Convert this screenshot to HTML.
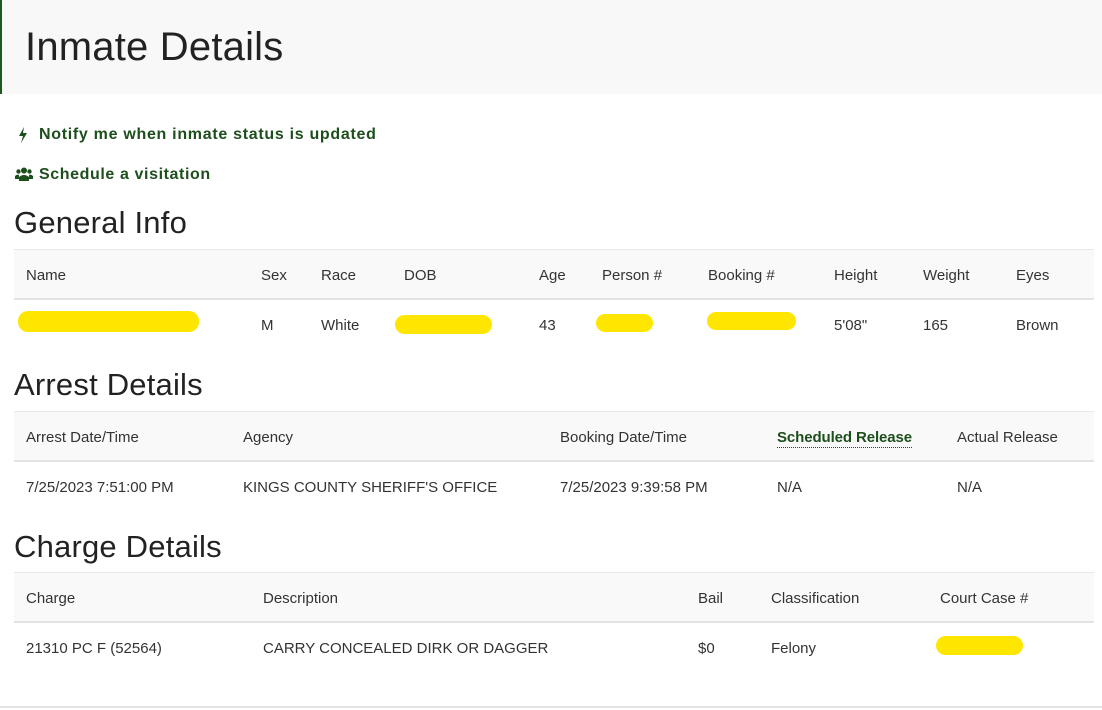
<!DOCTYPE html>
<html><head><style>
body{margin:0;width:1102px;height:710px;background:#fff;font-family:"Liberation Sans",sans-serif;color:#333;position:relative;overflow:hidden}
.a{position:absolute;white-space:nowrap}
.hdr{position:absolute;left:0;top:0;width:1102px;height:94px;background:#f8f8f8;border-left:2px solid #1e5a1e;box-sizing:border-box}
h1{position:absolute;left:25px;top:24px;margin:0;font-weight:normal;font-size:40px;color:#222;line-height:46px;letter-spacing:0.2px}
.lnk{color:#1d4f1d;font-weight:bold;font-size:16px;letter-spacing:0.6px}
h2{position:absolute;left:14px;margin:0;font-weight:normal;font-size:31px;color:#222;line-height:36px;letter-spacing:0.2px}
.th{position:absolute;left:14px;width:1080px;height:48px;background:#f9f9f9;border-top:1px solid #e8e8e8;border-bottom:2px solid #e3e3e3}
.t{position:absolute;font-size:15px;line-height:18px;white-space:nowrap}
.y{position:absolute;background:#ffe600;border-radius:10px}
</style></head><body>
<div class="hdr"></div>
<h1>Inmate Details</h1>
<svg class="a" style="left:18px;top:127px" width="10" height="16" viewBox="0 0 10 16"><path d="M6 0L1 9h4L3 16 9 6H5z" fill="#1d4f1d"/></svg>
<div class="a lnk" style="left:39px;top:126px;letter-spacing:0.7px">Notify me when inmate status is updated</div>
<svg class="a" style="left:15px;top:167px" width="18" height="14" viewBox="0 0 18 14"><circle cx="9" cy="3.5" r="3" fill="#1d4f1d"/><circle cx="3.5" cy="4.5" r="2.2" fill="#1d4f1d"/><circle cx="14.5" cy="4.5" r="2.2" fill="#1d4f1d"/><path d="M4 14v-4q5-4 10 0v4z M0 12v-3q2-2 4-1v4z M18 12v-3q-2-2-4-1v4z" fill="#1d4f1d"/></svg>
<div class="a lnk" style="left:39px;top:166px">Schedule a visitation</div>

<h2 style="top:205px">General Info</h2>
<div class="th" style="top:249px"></div>
<div class="t" style="left:26px;top:267px">Name</div>
<div class="t" style="left:261px;top:267px">Sex</div>
<div class="t" style="left:321px;top:267px">Race</div>
<div class="t" style="left:404px;top:267px">DOB</div>
<div class="t" style="left:539px;top:267px">Age</div>
<div class="t" style="left:602px;top:267px">Person #</div>
<div class="t" style="left:708px;top:267px">Booking #</div>
<div class="t" style="left:834px;top:267px">Height</div>
<div class="t" style="left:923px;top:267px">Weight</div>
<div class="t" style="left:1016px;top:267px">Eyes</div>
<div class="y" style="left:18px;top:311px;width:181px;height:21px"></div>
<div class="t" style="left:261px;top:317px">M</div>
<div class="t" style="left:321px;top:317px">White</div>
<div class="y" style="left:395px;top:315px;width:97px;height:19px"></div>
<div class="t" style="left:539px;top:317px">43</div>
<div class="y" style="left:596px;top:314px;width:57px;height:18px"></div>
<div class="y" style="left:707px;top:312px;width:89px;height:18px"></div>
<div class="t" style="left:834px;top:317px">5'08"</div>
<div class="t" style="left:923px;top:317px">165</div>
<div class="t" style="left:1016px;top:317px">Brown</div>

<h2 style="top:367px">Arrest Details</h2>
<div class="th" style="top:411px"></div>
<div class="t" style="left:26px;top:429px">Arrest Date/Time</div>
<div class="t" style="left:243px;top:429px">Agency</div>
<div class="t" style="left:560px;top:429px">Booking Date/Time</div>
<div class="t" style="left:777px;top:429px;color:#1d4f1d;font-weight:bold;letter-spacing:-0.1px;border-bottom:1px dotted #1d4f1d">Scheduled Release</div>
<div class="t" style="left:957px;top:429px">Actual Release</div>
<div class="t" style="left:26px;top:479px">7/25/2023 7:51:00 PM</div>
<div class="t" style="left:243px;top:479px">KINGS COUNTY SHERIFF'S OFFICE</div>
<div class="t" style="left:560px;top:479px">7/25/2023 9:39:58 PM</div>
<div class="t" style="left:777px;top:479px">N/A</div>
<div class="t" style="left:957px;top:479px">N/A</div>

<h2 style="top:529px">Charge Details</h2>
<div class="th" style="top:572px"></div>
<div class="t" style="left:26px;top:590px">Charge</div>
<div class="t" style="left:263px;top:590px">Description</div>
<div class="t" style="left:698px;top:590px">Bail</div>
<div class="t" style="left:771px;top:590px">Classification</div>
<div class="t" style="left:940px;top:590px">Court Case #</div>
<div class="t" style="left:26px;top:640px">21310 PC F (52564)</div>
<div class="t" style="left:263px;top:640px">CARRY CONCEALED DIRK OR DAGGER</div>
<div class="t" style="left:698px;top:640px">$0</div>
<div class="t" style="left:771px;top:640px">Felony</div>
<div class="y" style="left:936px;top:636px;width:87px;height:19px"></div>
<div class="a" style="left:0;top:706px;width:1102px;height:2px;background:#e3e3e3"></div>
</body></html>
